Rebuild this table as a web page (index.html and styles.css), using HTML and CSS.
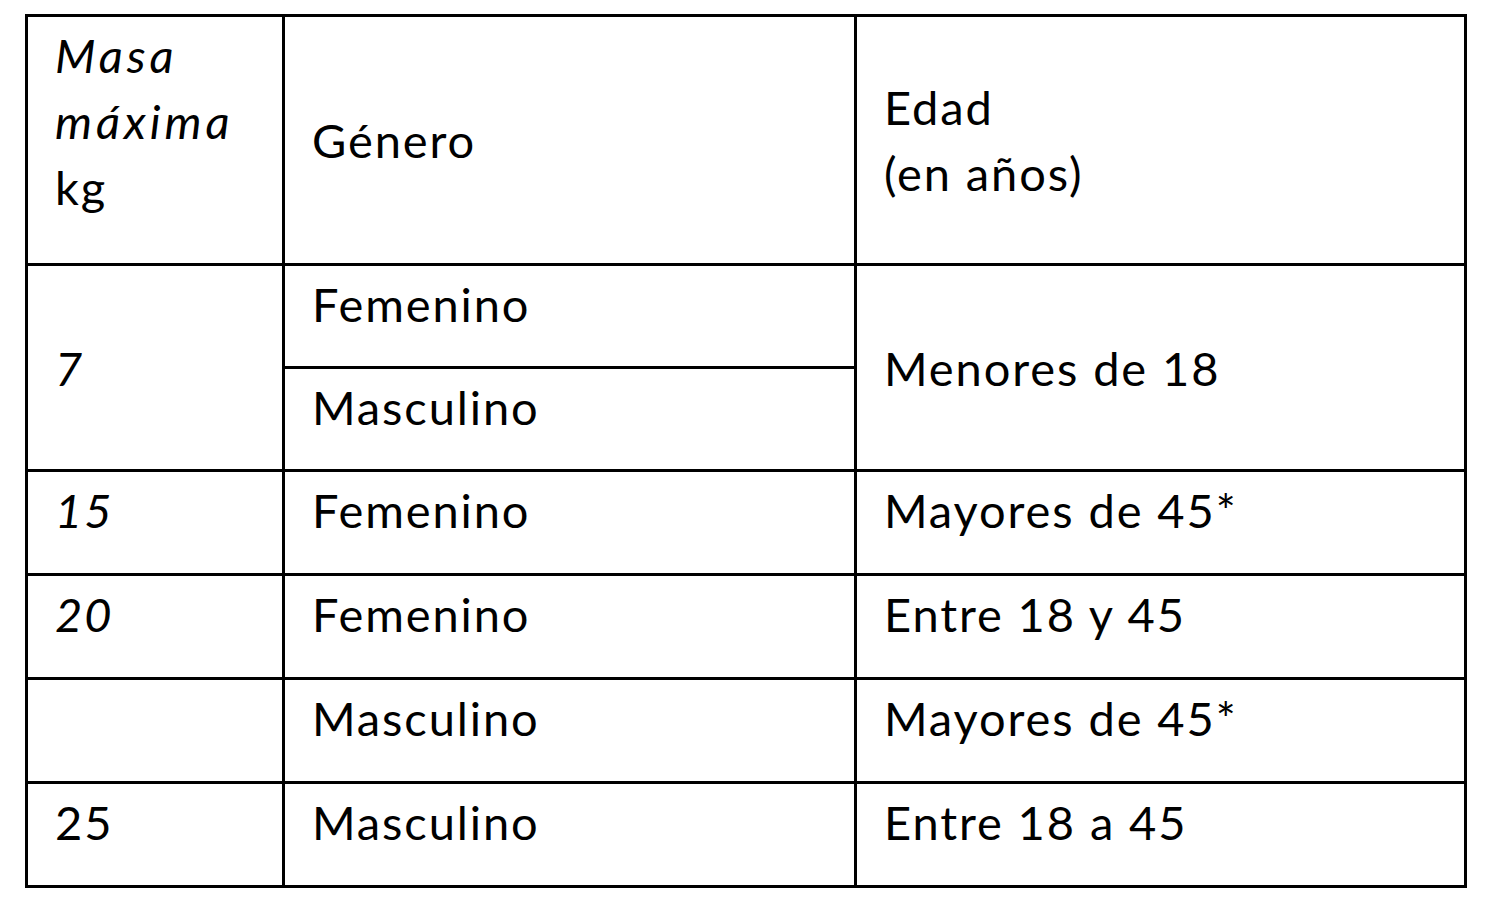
FILE: index.html
```html
<!DOCTYPE html>
<html lang="es">
<head>
<meta charset="utf-8">
<title>Tabla</title>
<link rel="stylesheet" href="styles.css">
</head>
<body>
<table class="grid">
  <colgroup>
    <col class="c1">
    <col class="c2">
    <col class="c3">
  </colgroup>
  <tr class="head">
    <td class="top"><em class="wide">Masa<br>máxima</em><br>kg</td>
    <td class="mid">Género</td>
    <td class="mid">Edad<br>(en años)</td>
  </tr>
  <tr class="half">
    <td rowspan="2" class="mid"><em>7</em></td>
    <td class="top">Femenino</td>
    <td rowspan="2" class="mid">Menores de 18</td>
  </tr>
  <tr class="half">
    <td class="top">Masculino</td>
  </tr>
  <tr class="row">
    <td class="top"><em>15</em></td>
    <td class="top">Femenino</td>
    <td class="top">Mayores de 45*</td>
  </tr>
  <tr class="row">
    <td class="top"><em>20</em></td>
    <td class="top">Femenino</td>
    <td class="top">Entre 18 y 45</td>
  </tr>
  <tr class="row">
    <td class="top"></td>
    <td class="top">Masculino</td>
    <td class="top">Mayores de 45*</td>
  </tr>
  <tr class="row">
    <td class="top">25</td>
    <td class="top">Masculino</td>
    <td class="top">Entre 18 a 45</td>
  </tr>
</table>
</body>
</html>
```
FILE: styles.css
```css
html, body {
  margin: 0;
  padding: 0;
  background: #fff;
}
body {
  padding: 14px 0 0 25px;
  font-family: Lato, "Open Sans", sans-serif;
  color: #000;
}
.grid {
  border-collapse: collapse;
  table-layout: fixed;
  width: 1439px;
  border: 3px solid #000;
}
.c1 { width: 257px; }
.c2 { width: 572px; }
.c3 { width: 610px; }
.grid td {
  border: 3px solid #000;
  padding: 0 0 0 27px;
  font-size: 47px;
  line-height: 66px;
  letter-spacing: 1.9px;
  box-sizing: border-box;
}
.grid td.top { vertical-align: top; padding-top: 5px; }
.grid td.mid { vertical-align: middle; }
.head td { height: 249px; }
.half td { height: 103px; }
.row td { height: 104px; }
em { font-style: italic; }
em.wide { letter-spacing: 4px; }
```
